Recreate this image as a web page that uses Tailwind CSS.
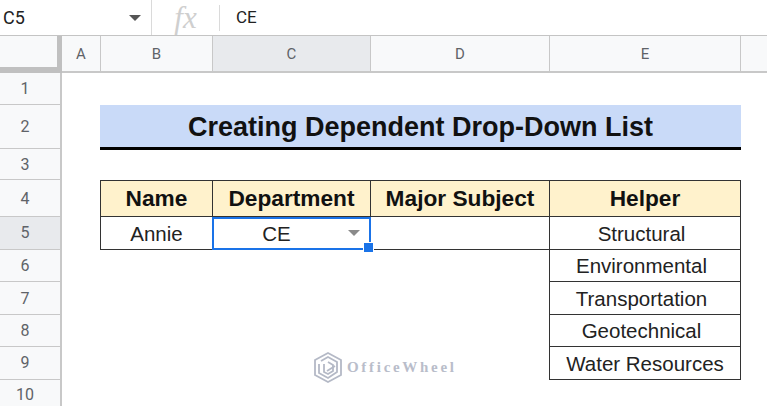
<!DOCTYPE html>
<html lang="en">
<head>
    <meta charset="UTF-8">
    <script src="https://cdn.jsdelivr.net/npm/@tailwindcss/browser@4"></script>
    <title>Dependent Drop-Down List</title>
</head>
<body class="w-[767px] h-[406px] overflow-hidden bg-white relative font-['Liberation_Sans',sans-serif] text-[#222]">
    <!-- Formula bar -->
    <div class="h-[36px] flex items-center border-b border-[#c4c4c4]">
        <div class="w-[152px] h-full flex items-center justify-between pl-[3px] pr-[10px] border-r border-[#dadada] font-['Roboto',sans-serif] text-[18px]">
            <span>C5</span>
            <div class="w-0 h-0 border-x-[6px] border-x-transparent border-t-[6px] border-t-[#555]"></div>
        </div>
        <div class="w-[67px] h-[35px] flex items-center justify-center font-['Liberation_Serif',serif] italic text-[31px] leading-[35px] text-[#cfcfcf]">fx</div>
        <div class="h-[26px] border-l border-[#dadada] pl-[16px] flex items-center font-['Roboto',sans-serif] text-[17px]">CE</div>
    </div>

    <!-- Sheet -->
    <div class="grid grid-cols-[62px_39px_112px_158px_179px_191px_26px] grid-rows-[37px_32px_44px_31px_37px_33px_32px_33px_32px_33px_32px]">
        <!-- column headers -->
        <div class="bg-[#f8f9fa] border-r-[5px] border-b-[6px] border-[#c0c0c0]"></div>
        <div class="flex items-center justify-center bg-[#f8f9fa] border-r border-b-2 border-[#c8c8c8] pt-[1px] font-['Roboto',sans-serif] text-[15px] text-[#5f6368]">A</div>
        <div class="flex items-center justify-center bg-[#f8f9fa] border-r border-b-2 border-[#c8c8c8] pt-[1px] font-['Roboto',sans-serif] text-[15px] text-[#5f6368]">B</div>
        <div class="flex items-center justify-center bg-[#e8eaed] border-r border-b-2 border-[#c8c8c8] pt-[1px] font-['Roboto',sans-serif] text-[15px] text-[#5f6368]">C</div>
        <div class="flex items-center justify-center bg-[#f8f9fa] border-r border-b-2 border-[#c8c8c8] pt-[1px] font-['Roboto',sans-serif] text-[15px] text-[#5f6368]">D</div>
        <div class="flex items-center justify-center bg-[#f8f9fa] border-r border-b-2 border-[#c8c8c8] pt-[1px] font-['Roboto',sans-serif] text-[15px] text-[#5f6368]">E</div>
        <div class="bg-[#f8f9fa] border-b-2 border-[#c8c8c8]"></div>

        <!-- row 1 -->
        <div class="flex items-center justify-center bg-[#f8f9fa] border-r-2 border-b border-[#c8c8c8] pr-[10px] pt-[1px] font-['Roboto',sans-serif] text-[16px] text-[#5f6368]">1</div>
        <div class="col-span-6"></div>

        <!-- row 2 -->
        <div class="flex items-center justify-center bg-[#f8f9fa] border-r-2 border-b border-[#c8c8c8] pr-[10px] pt-[1px] font-['Roboto',sans-serif] text-[16px] text-[#5f6368]">2</div>
        <div></div>
        <div class="col-span-4 ml-[-1px] flex items-center justify-center bg-[#c9daf8] border-b-[3px] border-black pt-[2px] mb-[-1px] font-bold text-[27px] text-[#111]">Creating Dependent Drop-Down List</div>
        <div></div>

        <!-- row 3 -->
        <div class="flex items-center justify-center bg-[#f8f9fa] border-r-2 border-b border-[#c8c8c8] pr-[10px] pt-[1px] font-['Roboto',sans-serif] text-[16px] text-[#5f6368]">3</div>
        <div class="col-span-6"></div>

        <!-- row 4 -->
        <div class="flex items-center justify-center bg-[#f8f9fa] border-r-2 border-b border-[#c8c8c8] pr-[10px] pt-[1px] font-['Roboto',sans-serif] text-[16px] text-[#5f6368]">4</div>
        <div></div>
        <div class="ml-[-1px] flex items-center justify-center bg-[#fff2cc] border border-[#333] font-bold text-[22.7px] text-[#111]">Name</div>
        <div class="flex items-center justify-center bg-[#fff2cc] border-y border-r border-[#333] font-bold text-[22.7px] text-[#111]">Department</div>
        <div class="flex items-center justify-center bg-[#fff2cc] border-y border-r border-[#333] font-bold text-[22.7px] text-[#111]">Major Subject</div>
        <div class="flex items-center justify-center bg-[#fff2cc] border-y border-r border-[#333] font-bold text-[22.7px] text-[#111]">Helper</div>
        <div></div>

        <!-- row 5 -->
        <div class="flex items-center justify-center bg-[#e8eaed] border-r-2 border-b border-[#c8c8c8] pr-[10px] font-['Roboto',sans-serif] text-[16px] text-[#5f6368]">5</div>
        <div></div>
        <div class="ml-[-1px] flex items-center justify-center border-x border-b border-[#333] pt-[3px] text-[20.5px]">Annie</div>
        <div class="relative ml-[-1px] flex items-center justify-center border-2 border-[#1a73e8] pr-[30px] pt-[2px] text-[20.5px]">
            CE
            <div class="absolute right-[9px] top-[11px] w-0 h-0 border-x-[6px] border-x-transparent border-t-[6px] border-t-[#8a8a8a]"></div>
            <div class="absolute right-[-5px] bottom-[-5px] w-[11px] h-[11px] bg-[#1a73e8] border border-white"></div>
        </div>
        <div class="border-b border-r border-[#333]"></div>
        <div class="flex items-center justify-center border-b border-r border-[#333] pr-[7px] pt-[2px] text-[20.5px]">Structural</div>
        <div></div>

        <!-- row 6 -->
        <div class="flex items-center justify-center bg-[#f8f9fa] border-r-2 border-b border-[#c8c8c8] pr-[10px] pt-[1px] font-['Roboto',sans-serif] text-[16px] text-[#5f6368]">6</div>
        <div class="col-span-3"></div>
        <div class="border-r border-[#333]"></div>
        <div class="flex items-center justify-center border-b border-r border-[#333] pr-[7px] pt-[2px] text-[20.5px]">Environmental</div>
        <div></div>

        <!-- row 7 -->
        <div class="flex items-center justify-center bg-[#f8f9fa] border-r-2 border-b border-[#c8c8c8] pr-[10px] pt-[1px] font-['Roboto',sans-serif] text-[16px] text-[#5f6368]">7</div>
        <div class="col-span-3"></div>
        <div class="border-r border-[#333]"></div>
        <div class="flex items-center justify-center border-b border-r border-[#333] pr-[7px] pt-[2px] text-[20.5px]">Transportation</div>
        <div></div>

        <!-- row 8 -->
        <div class="flex items-center justify-center bg-[#f8f9fa] border-r-2 border-b border-[#c8c8c8] pr-[10px] font-['Roboto',sans-serif] text-[16px] text-[#5f6368]">8</div>
        <div class="col-span-3"></div>
        <div class="border-r border-[#333]"></div>
        <div class="flex items-center justify-center border-b border-r border-[#333] pr-[7px] pt-[2px] text-[20.5px]">Geotechnical</div>
        <div></div>

        <!-- row 9 -->
        <div class="flex items-center justify-center bg-[#f8f9fa] border-r-2 border-b border-[#c8c8c8] pr-[10px] pb-[1px] font-['Roboto',sans-serif] text-[16px] text-[#5f6368]">9</div>
        <div class="col-span-3"></div>
        <div class="border-r border-[#333]"></div>
        <div class="flex items-center justify-center border-b border-r border-[#333] pt-[2px] text-[20.5px]">Water Resources</div>
        <div></div>

        <!-- row 10 -->
        <div class="flex items-center justify-center bg-[#f8f9fa] border-r-2 border-[#c8c8c8] pr-[10px] pb-[2px] font-['Roboto',sans-serif] text-[16px] text-[#5f6368]">10</div>
        <div class="col-span-6"></div>
    </div>

    <!-- Watermark -->
    <div class="absolute left-[313px] top-[351px] flex items-center gap-[4px] text-[#b9bdca]">
        <svg class="w-[30px] h-[33px]" viewBox="0 0 30 33" fill="none" stroke="#b4b9c6" stroke-width="1.8">
            <path d="M15 2 L28 9 V24 L15 31 L2 24 V9 Z"/>
            <path d="M8 10 L15 6 L24 11 V21 L15 27 L6 22 V13"/>
            <path d="M11 13 V21 L15 23 L20 20 V14 L15 11"/>
            <path d="M14 20 L22 15"/>
        </svg>
        <span class="font-['Liberation_Serif',serif] font-bold text-[15px] tracking-[2.7px]">OfficeWheel</span>
    </div>
</body>
</html>
